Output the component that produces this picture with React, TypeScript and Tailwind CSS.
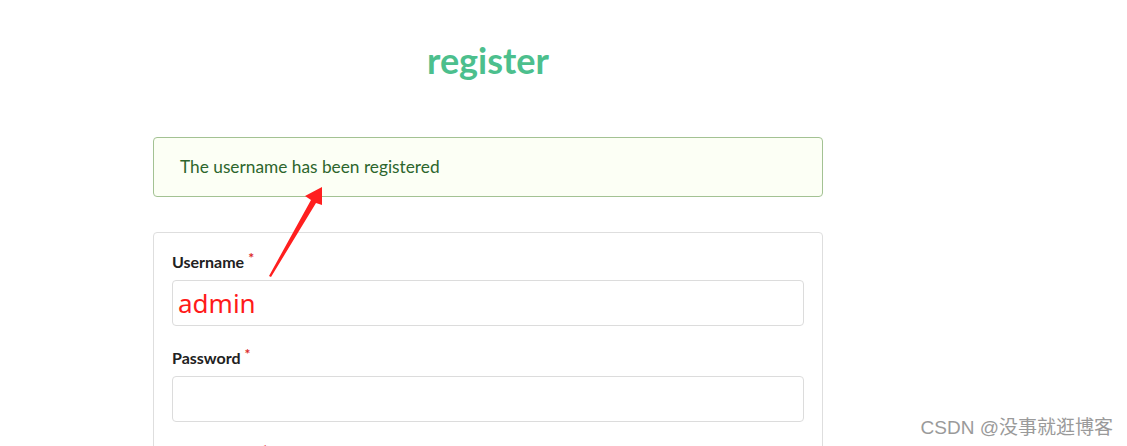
import React from 'react';

// Register page: success message + form card, with a red annotation arrow

const Label: React.FC<{ text: string }> = ({ text }) => (
  <label className="block text-[16px] font-bold text-[#212121] leading-[18px] mb-[8px]">
    {text}
    <span className="relative -top-[5px] ml-[4px] text-[14px] text-[#db2828]">*</span>
  </label>
);

export default function App() {
  return (
    <div className="relative w-[1127px] h-[446px] overflow-hidden bg-white font-['Lato',sans-serif]">
      <div className="ml-[153px] w-[670px]">
        <h1 className="pt-[38px] h-[137px] text-center text-[36px] font-bold leading-[44px] text-[#4cbf8d]">
          register
        </h1>

        <div className="h-[60px] flex items-center pl-[26px] rounded-[4px] border border-[#a3c293] bg-[#fcfff5] text-[17.3px] text-[#2c662d]">
          The username has been registered
        </div>

        <div className="mt-[35px] rounded-[4px] border border-[#dedede] px-[18px] pt-[20px] pb-[20px]">
          <div className="mb-[23px]">
            <Label text="Username" />
            <div className="h-[46px] flex items-center px-[5px] rounded-[4px] border border-[#dcdcdc] text-[26px] text-[#ff1a1a] font-['Noto_Sans',sans-serif]">
              admin
            </div>
          </div>
          <div className="mb-[23px]">
            <Label text="Password" />
            <div className="h-[46px] rounded-[4px] border border-[#dcdcdc]" />
          </div>
          <div>
            <Label text="Repassword" />
            <div className="h-[46px] rounded-[4px] border border-[#dcdcdc]" />
          </div>
        </div>
      </div>

      {/* annotation arrow */}
      <svg className="absolute left-0 top-0" width="1127" height="446">
        <polygon points="269,276 311,200 305,196 322,187 322,205 316,203 271,277" fill="#ff1f1f" />
      </svg>

      <div className="absolute right-[14px] bottom-[4px] text-[19px] text-[#9a9a9a] font-['Liberation_Sans','Noto_Sans_CJK_SC',sans-serif]">
        CSDN @没事就逛博客
      </div>
    </div>
  );
}
